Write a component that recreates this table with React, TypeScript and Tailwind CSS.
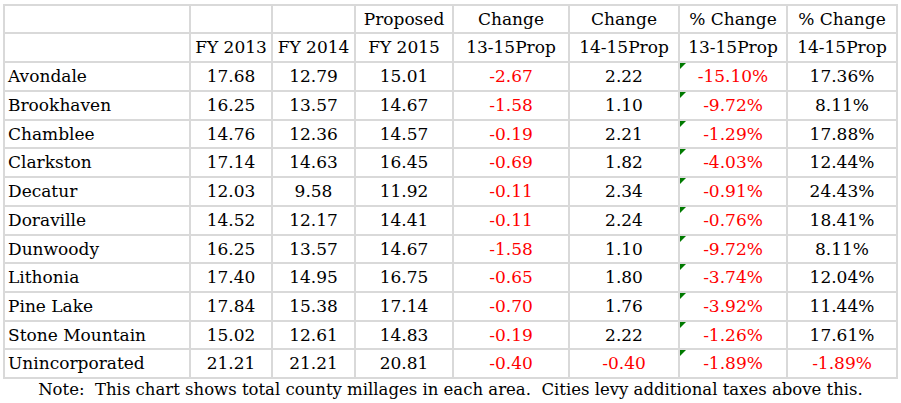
import React from "react";

type Row = [string, string, string, string, string, string, string, string];

const rows: Row[] = [
  ["Avondale", "17.68", "12.79", "15.01", "-2.67", "2.22", "-15.10%", "17.36%"],
  ["Brookhaven", "16.25", "13.57", "14.67", "-1.58", "1.10", "-9.72%", "8.11%"],
  ["Chamblee", "14.76", "12.36", "14.57", "-0.19", "2.21", "-1.29%", "17.88%"],
  ["Clarkston", "17.14", "14.63", "16.45", "-0.69", "1.82", "-4.03%", "12.44%"],
  ["Decatur", "12.03", "9.58", "11.92", "-0.11", "2.34", "-0.91%", "24.43%"],
  ["Doraville", "14.52", "12.17", "14.41", "-0.11", "2.24", "-0.76%", "18.41%"],
  ["Dunwoody", "16.25", "13.57", "14.67", "-1.58", "1.10", "-9.72%", "8.11%"],
  ["Lithonia", "17.40", "14.95", "16.75", "-0.65", "1.80", "-3.74%", "12.04%"],
  ["Pine Lake", "17.84", "15.38", "17.14", "-0.70", "1.76", "-3.92%", "11.44%"],
  ["Stone Mountain", "15.02", "12.61", "14.83", "-0.19", "2.22", "-1.26%", "17.61%"],
  ["Unincorporated", "21.21", "21.21", "20.81", "-0.40", "-0.40", "-1.89%", "-1.89%"],
];

const head1 = ["", "", "", "Proposed", "Change", "Change", "% Change", "% Change"];
const head2 = ["", "FY 2013", "FY 2014", "FY 2015", "13-15Prop", "14-15Prop", "13-15Prop", "14-15Prop"];

function Cell({ children, left, red, flag }: { children?: React.ReactNode; left?: boolean; red?: boolean; flag?: boolean }) {
  return (
    <div
      className={
        "relative bg-white flex items-center whitespace-nowrap " +
        (left ? "justify-start pl-[3px] " : "justify-center ") +
        (red ? "text-[#ff0000]" : "text-black")
      }
    >
      {flag && (
        <svg className="absolute left-0 top-0" width="6" height="6" viewBox="0 0 6 6">
          <polygon points="0,0 6,0 0,6" fill="#007a00" />
        </svg>
      )}
      {children}
    </div>
  );
}

export default function App() {
  return (
    <div
      className="w-[901px] h-[403px] bg-white pt-[4px] pl-[3px]"
      style={{ fontFamily: '"DejaVu Serif", "Liberation Serif", serif' }}
    >
      <div className="grid w-[895px] bg-[#d9d9d9] p-[2px] gap-[2px] text-[17px] leading-none grid-cols-[184px_80px_81px_96px_114px_108px_106px_108px] grid-rows-[26px_27px_27px_27px_26px_27px_27px_27px_26px_27px_27px_26px_27px]">
        {head1.map((h, i) => (
          <Cell key={"h1" + i}>{h}</Cell>
        ))}
        {head2.map((h, i) => (
          <Cell key={"h2" + i}>{h}</Cell>
        ))}
        {rows.map((r, ri) =>
          r.map((v, ci) => (
            <Cell
              key={ri + "-" + ci}
              left={ci === 0}
              red={ci > 0 && v.startsWith("-")}
              flag={ci === 6}
            >
              {v}
            </Cell>
          ))
        )}
      </div>
      <div className="w-[895px] text-center text-[16.5px] leading-[22px] text-black whitespace-nowrap">
        Note:&nbsp; This chart shows total county millages in each area.&nbsp; Cities levy additional taxes above this.
      </div>
    </div>
  );
}
